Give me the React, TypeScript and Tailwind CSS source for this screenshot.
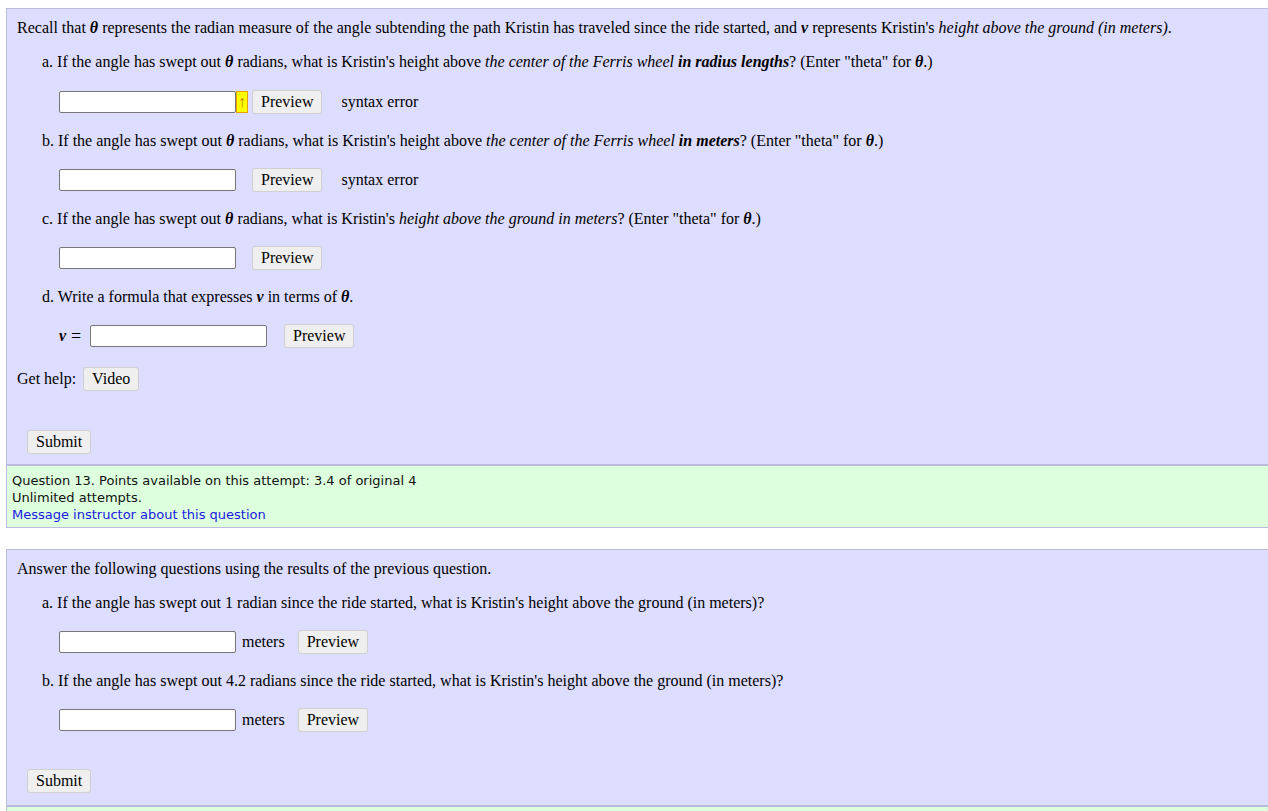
import React from "react";

const serif = { fontFamily: '"Liberation Serif", "Times New Roman", serif' };

const Th = () => <b className="italic">θ</b>;
const V = () => <b className="italic">v</b>;

const Field = ({ w = "w-[177px]" }: { w?: string }) => (
  <input
    type="text"
    className={`${w} h-[22px] bg-white border border-[#767676] rounded-[2px] outline-none`}
  />
);

const Btn = ({ label }: { label: string }) => (
  <button className="h-[24px] px-[8px] bg-[#efefef] border border-[#d0d0d0] rounded-[3px] text-[16px] leading-none text-black">
    {label}
  </button>
);

const Row = ({ children, cls = "" }: { children: React.ReactNode; cls?: string }) => (
  <div className={`h-[24px] flex items-center whitespace-nowrap ${cls}`}>{children}</div>
);

const Info = () => (
  <div
    className="bg-[#ddffdd] border-t border-b border-l border-[#bbbbdd] pl-[5px] pt-[6px] pb-[4px] text-[13px] leading-[17px] text-[#111]"
    style={{ fontFamily: '"DejaVu Sans", Verdana, sans-serif' }}
  >
    <div>Question 13. Points available on this attempt: 3.4 of original 4</div>
    <div>Unlimited attempts.</div>
    <div className="text-[#1a1ae6]">Message instructor about this question</div>
  </div>
);

export default function App() {
  return (
    <div className="w-full h-[811px] overflow-hidden bg-white text-[16px] text-black" style={serif}>
      <div className="w-[1300px] ml-[6px] pt-[8px]">
        <div className="bg-[#ddddff] border-t border-b border-l border-[#bbbbdd] pl-[10px] pt-[7px] pb-[10px]">
          <Row>
            Recall that&nbsp;<Th />&nbsp;represents the radian measure of the angle subtending the path Kristin has traveled since the ride started, and&nbsp;<V />&nbsp;represents Kristin's&nbsp;<i>height above the ground (in meters)</i>.
          </Row>
          <Row cls="mt-[10px] pl-[25px]">
            a. If the angle has swept out&nbsp;<Th />&nbsp;radians, what is Kristin's height above&nbsp;<i>the center of the Ferris wheel</i>&nbsp;<b><i>in radius lengths</i></b>? (Enter "theta" for&nbsp;<Th />.)
          </Row>
          <Row cls="mt-[16px] pl-[42px]">
            <Field />
            <span className="w-[12px] h-[22px] bg-[#ffff00] border border-[#e8a000] text-[#c87800] text-[16px] font-bold flex items-center justify-center leading-none">↑</span>
            <span className="ml-[4px]"><Btn label="Preview" /></span>
            <span className="ml-[19px]">syntax error</span>
          </Row>
          <Row cls="mt-[15px] pl-[25px]">
            b. If the angle has swept out&nbsp;<Th />&nbsp;radians, what is Kristin's height above&nbsp;<i>the center of the Ferris wheel</i>&nbsp;<b><i>in meters</i></b>? (Enter "theta" for&nbsp;<Th />.)
          </Row>
          <Row cls="mt-[15px] pl-[42px]">
            <Field />
            <span className="ml-[16px]"><Btn label="Preview" /></span>
            <span className="ml-[19px]">syntax error</span>
          </Row>
          <Row cls="mt-[15px] pl-[25px]">
            c. If the angle has swept out&nbsp;<Th />&nbsp;radians, what is Kristin's&nbsp;<i>height above the ground in meters</i>? (Enter "theta" for&nbsp;<Th />.)
          </Row>
          <Row cls="mt-[15px] pl-[42px]">
            <Field />
            <span className="ml-[16px]"><Btn label="Preview" /></span>
          </Row>
          <Row cls="mt-[15px] pl-[25px]">
            d. Write a formula that expresses&nbsp;<V />&nbsp;in terms of&nbsp;<Th />.
          </Row>
          <Row cls="mt-[15px] pl-[42px]">
            <span className="w-[31px] flex items-center">
              <V />
              <span className="ml-[5px] text-[18px]">=</span>
            </span>
            <Field />
            <span className="ml-[17px]"><Btn label="Preview" /></span>
          </Row>
          <Row cls="mt-[19px]">
            Get help:
            <span className="ml-[7px]"><Btn label="Video" /></span>
          </Row>
          <Row cls="mt-[39px] pl-[10px]">
            <Btn label="Submit" />
          </Row>
        </div>
        <Info />
        <div className="h-[21px]" />
        <div className="bg-[#ddddff] border-t border-b border-l border-[#bbbbdd] pl-[10px] pt-[7px] pb-[12px]">
          <Row>Answer the following questions using the results of the previous question.</Row>
          <Row cls="mt-[10px] pl-[25px]">
            a. If the angle has swept out 1 radian since the ride started, what is Kristin's height above the ground (in meters)?
          </Row>
          <Row cls="mt-[15px] pl-[42px]">
            <Field />
            <span className="ml-[6px]">meters</span>
            <span className="ml-[13px]"><Btn label="Preview" /></span>
          </Row>
          <Row cls="mt-[15px] pl-[25px]">
            b. If the angle has swept out 4.2 radians since the ride started, what is Kristin's height above the ground (in meters)?
          </Row>
          <Row cls="mt-[15px] pl-[42px]">
            <Field />
            <span className="ml-[6px]">meters</span>
            <span className="ml-[13px]"><Btn label="Preview" /></span>
          </Row>
          <Row cls="mt-[37px] pl-[10px]">
            <Btn label="Submit" />
          </Row>
        </div>
        <Info />
      </div>
    </div>
  );
}
